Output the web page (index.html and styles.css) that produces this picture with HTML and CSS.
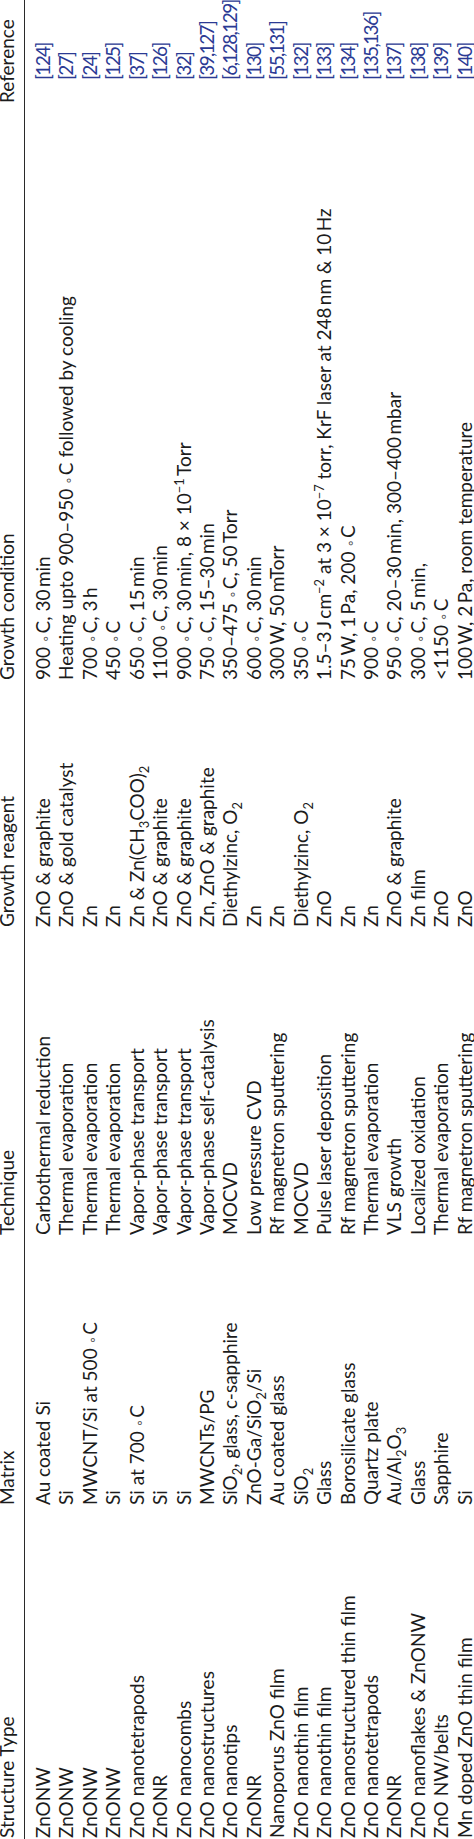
FILE: index.html
```html
<!DOCTYPE html>
<html lang="en">
<head>
<meta charset="utf-8">
<title>ZnO nanostructure growth</title>
<link rel="stylesheet" href="styles.css">
</head>
<body>
<div class="sheet">
<div class="growth" role="table">
<div class="row head" role="row"><span role="columnheader">Structure Type</span><span role="columnheader">Matrix</span><span role="columnheader">Technique</span><span role="columnheader">Growth reagent</span><span role="columnheader">Growth condition</span><span role="columnheader">Reference</span></div>
<div class="body">
<div class="row" role="row"><span>ZnONW</span><span>Au coated Si</span><span>Carbothermal reduction</span><span>ZnO &amp; graphite</span><span>900<i class="deg">∘</i>C, 30&#8201;min</span><span class="ref">[124]</span></div>
<div class="row" role="row"><span>ZnONW</span><span>Si</span><span>Thermal evaporation</span><span>ZnO &amp; gold catalyst</span><span>Heating upto 900–950<i class="deg">∘</i>C followed by cooling</span><span class="ref">[27]</span></div>
<div class="row" role="row"><span>ZnONW</span><span>MWCNT/Si at 500<i class="deg">∘</i>C</span><span>Thermal evaporation</span><span>Zn</span><span>700<i class="deg">∘</i>C, 3&#8201;h</span><span class="ref">[24]</span></div>
<div class="row" role="row"><span>ZnONW</span><span>Si</span><span>Thermal evaporation</span><span>Zn</span><span>450<i class="deg">∘</i>C</span><span class="ref">[125]</span></div>
<div class="row" role="row"><span>ZnO nanotetrapods</span><span>Si at 700<i class="deg">∘</i>C</span><span>Vapor-phase transport</span><span>Zn &amp; Zn(CH<sub>3</sub>COO)<sub>2</sub></span><span>650<i class="deg">∘</i>C, 15&#8201;min</span><span class="ref">[37]</span></div>
<div class="row" role="row"><span>ZnONR</span><span>Si</span><span>Vapor-phase transport</span><span>ZnO &amp; graphite</span><span>1100<i class="deg">∘</i>C, 30&#8201;min</span><span class="ref">[126]</span></div>
<div class="row" role="row"><span>ZnO nanocombs</span><span>Si</span><span>Vapor-phase transport</span><span>ZnO &amp; graphite</span><span>900<i class="deg">∘</i>C, 30&#8201;min, 8 × 10<sup>−1</sup>&#8201;Torr</span><span class="ref">[32]</span></div>
<div class="row" role="row"><span>ZnO nanostructures</span><span>MWCNTs/PG</span><span>Vapor-phase self-catalysis</span><span>Zn, ZnO &amp; graphite</span><span>750<i class="deg">∘</i>C, 15–30&#8201;min</span><span class="ref">[39,127]</span></div>
<div class="row" role="row"><span>ZnO nanotips</span><span>SiO<sub>2</sub>, glass, c-sapphire</span><span>MOCVD</span><span>Diethylzinc, O<sub>2</sub></span><span>350–475<i class="deg">∘</i>C, 50&#8201;Torr</span><span class="ref">[6,128,129]</span></div>
<div class="row" role="row"><span>ZnONR</span><span>ZnO-Ga/SiO<sub>2</sub>/Si</span><span>Low pressure CVD</span><span>Zn</span><span>600<i class="deg">∘</i>C, 30&#8201;min</span><span class="ref">[130]</span></div>
<div class="row" role="row"><span>Nanoporus ZnO film</span><span>Au coated glass</span><span>Rf magnetron sputtering</span><span>Zn</span><span>300&#8201;W, 50&#8201;mTorr</span><span class="ref">[55,131]</span></div>
<div class="row" role="row"><span>ZnO nanothin film</span><span>SiO<sub>2</sub></span><span>MOCVD</span><span>Diethylzinc, O<sub>2</sub></span><span>350<i class="deg">∘</i>C</span><span class="ref">[132]</span></div>
<div class="row" role="row"><span>ZnO nanothin film</span><span>Glass</span><span>Pulse laser deposition</span><span>ZnO</span><span>1.5–3&#8201;J&#8201;cm<sup>−2</sup> at 3 × 10<sup>−7</sup> torr, KrF laser at 248&#8201;nm &amp; 10&#8201;Hz</span><span class="ref">[133]</span></div>
<div class="row" role="row"><span>ZnO nanostructured thin film</span><span>Borosilicate glass</span><span>Rf magnetron sputtering</span><span>Zn</span><span>75&#8201;W, 1&#8201;Pa, 200<i class="deg">∘</i>C</span><span class="ref">[134]</span></div>
<div class="row" role="row"><span>ZnO nanotetrapods</span><span>Quartz plate</span><span>Thermal evaporation</span><span>Zn</span><span>900<i class="deg">∘</i>C</span><span class="ref">[135,136]</span></div>
<div class="row" role="row"><span>ZnONR</span><span>Au/Al<sub>2</sub>O<sub>3</sub></span><span>VLS growth</span><span>ZnO &amp; graphite</span><span>950<i class="deg">∘</i>C, 20–30&#8201;min, 300–400&#8201;mbar</span><span class="ref">[137]</span></div>
<div class="row" role="row"><span>ZnO nanoflakes &amp; ZnONW</span><span>Glass</span><span>Localized oxidation</span><span>Zn film</span><span>300<i class="deg">∘</i>C, 5&#8201;min,</span><span class="ref">[138]</span></div>
<div class="row" role="row"><span>ZnO NW/belts</span><span>Sapphire</span><span>Thermal evaporation</span><span>ZnO</span><span>&lt;1150<i class="deg">∘</i>C</span><span class="ref">[139]</span></div>
<div class="row" role="row"><span>Mn doped ZnO thin film</span><span>Si</span><span>Rf magnetron sputtering</span><span>ZnO</span><span>100&#8201;W, 2&#8201;Pa, room temperature</span><span class="ref">[140]</span></div>
</div>
</div>
</div>
</body>
</html>
```
FILE: styles.css
```css
html, body {
  margin: 0;
  padding: 0;
  background: #ffffff;
  overflow: hidden;
}
body {
  width: 474px;
  height: 1839px;
}
.sheet {
  display: flow-root;
  width: 1839px;
  height: 474px;
  transform-origin: 0 0;
  transform: rotate(-90deg) translateX(-100%);
  font-family: Lato, "Open Sans", sans-serif;
  font-size: 19px;
  color: #1c1c1c;
}
.growth {
  width: 1839px;
  margin-top: -5px;
}
.row {
  display: grid;
  grid-template-columns: 334px 270px 308px 247px 577px 103px;
  height: 23.43px;
  line-height: 23.43px;
  white-space: nowrap;
}
.row > span:first-child {
  padding-left: 1px;
}
.head {
  box-sizing: content-box;
  padding-bottom: 6px;
  border-bottom: 1px solid #2a2a2a;
}
.body {
  padding-top: 5.6px;
}
.ref {
  padding-left: 23px;
  color: #2b3a94;
  letter-spacing: -1.6px;
}
sub,
sup {
  font-size: 0.68em;
  line-height: 0;
}
.deg {
  font-style: normal;
  font-family: "DejaVu Sans", sans-serif;
  font-size: 0.72em;
  line-height: 0;
  color: #555;
  padding: 0 1px 0 4px;
}
```
